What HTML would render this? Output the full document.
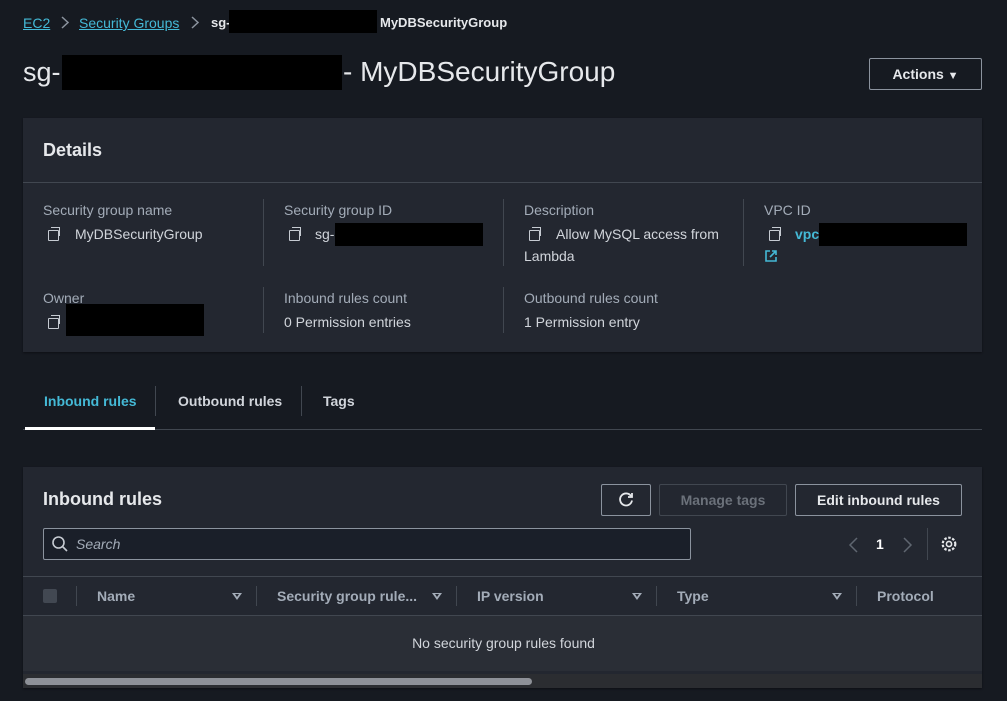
<!DOCTYPE html>
<html><head><style>
*{margin:0;padding:0;box-sizing:border-box}
body{width:1007px;height:701px;background:#161a21;font-family:"Liberation Sans",sans-serif;color:#d1d5db;position:relative;overflow:hidden;font-size:14px}
.a{position:absolute;white-space:nowrap}
.blk{position:absolute;background:#000}
.lbl{color:#a3acb8;font-size:14px}
.val{color:#d1d5db;font-size:14px}
.b{font-weight:bold}
.vl{position:absolute;width:1px;background:#414750}
.cp{position:absolute;width:11px;height:11px;border:1.5px solid #c6cbd2;border-radius:1px}
.cp:before{content:"";position:absolute;left:2px;top:-4px;width:8px;height:8px;border-top:1.5px solid #c6cbd2;border-right:1.5px solid #c6cbd2}
.panel{position:absolute;background:#232730;box-shadow:0 1px 2px #0006}
.btn{position:absolute;border:1px solid #8b939e;border-radius:2px;color:#e6e8eb;font-weight:bold;font-size:14px;text-align:center}
.tri{position:absolute;width:0;height:0;border-left:5px solid transparent;border-right:5px solid transparent;border-top:7px solid #a3acb8}
.tri:after{content:"";position:absolute;left:-2.5px;top:-5.8px;border-left:2.5px solid transparent;border-right:2.5px solid transparent;border-top:3.5px solid #232730}
</style></head><body>
<div class="a" style="left:23px;top:15px;color:#44b9d6;text-decoration:underline;font-size:14px">EC2</div>
<svg class="a" style="left:60px;top:15px" width="10" height="15"><path d="M2 2l6 5.5L2 13" stroke="#8b939e" stroke-width="1.5" fill="none"/></svg>
<div class="a" style="left:79px;top:15px;color:#44b9d6;text-decoration:underline;font-size:14px">Security Groups</div>
<svg class="a" style="left:190px;top:15px" width="10" height="15"><path d="M2 2l6 5.5L2 13" stroke="#8b939e" stroke-width="1.5" fill="none"/></svg>
<div class="a b" style="left:211px;top:15px;color:#e6e8eb;font-size:13px">sg-</div>
<div class="blk" style="left:229px;top:10px;width:148px;height:23px"></div>
<div class="a b" style="left:380px;top:15px;color:#e6e8eb;font-size:13px">MyDBSecurityGroup</div>

<div class="a" style="left:23px;top:57px;color:#e6e8eb;font-size:27px">sg-</div>
<div class="blk" style="left:62px;top:55px;width:280px;height:35px"></div>
<div class="a" style="left:343px;top:56px;color:#e6e8eb;font-size:28px">- MyDBSecurityGroup</div>
<div class="btn" style="left:869px;top:58px;width:113px;height:32px;line-height:30px">Actions <span style="font-size:11px">&#9660;</span></div>

<div class="panel" style="left:23px;top:118px;width:959px;height:234px"></div>
<div class="a b" style="left:43px;top:140px;font-size:18px;color:#e6e8eb">Details</div>
<div class="a" style="left:23px;top:182px;width:959px;height:1px;background:#414750"></div>
<div class="vl" style="left:263px;top:199px;height:67px"></div>
<div class="vl" style="left:503px;top:199px;height:67px"></div>
<div class="vl" style="left:743px;top:199px;height:67px"></div>
<div class="vl" style="left:263px;top:287px;height:46px"></div>
<div class="vl" style="left:503px;top:287px;height:46px"></div>

<div class="a lbl" style="left:43px;top:202px">Security group name</div>
<div class="cp" style="left:48px;top:230px"></div>
<div class="a val" style="left:75px;top:226px">MyDBSecurityGroup</div>
<div class="a lbl" style="left:284px;top:202px">Security group ID</div>
<div class="cp" style="left:289px;top:230px"></div>
<div class="a val" style="left:315px;top:226px">sg-</div>
<div class="blk" style="left:335px;top:223px;width:148px;height:23px"></div>
<div class="a lbl" style="left:524px;top:202px">Description</div>
<div class="cp" style="left:529px;top:230px"></div>
<div class="a val" style="left:556px;top:226px">Allow MySQL access from</div>
<div class="a val" style="left:524px;top:248px">Lambda</div>
<div class="a lbl" style="left:764px;top:202px">VPC ID</div>
<div class="cp" style="left:769px;top:230px"></div>
<div class="a b" style="left:795px;top:226px;color:#44b9d6;font-size:14px">vpc-</div>
<div class="blk" style="left:819px;top:223px;width:148px;height:23px"></div>
<svg class="a" style="left:764px;top:249px" width="14" height="14"><path d="M6 2H2v10h10V8M8 2h4v4M12 2L6 8" stroke="#44b9d6" stroke-width="1.6" fill="none"/></svg>

<div class="a lbl" style="left:43px;top:290px">Owner</div>
<div class="cp" style="left:48px;top:318px"></div>
<div class="blk" style="left:66px;top:304px;width:138px;height:32px"></div>
<div class="a lbl" style="left:284px;top:290px">Inbound rules count</div>
<div class="a val" style="left:284px;top:314px">0 Permission entries</div>
<div class="a lbl" style="left:524px;top:290px">Outbound rules count</div>
<div class="a val" style="left:524px;top:314px">1 Permission entry</div>

<div class="a b" style="left:44px;top:393px;color:#44b9d6;font-size:14px">Inbound rules</div>
<div class="vl" style="left:155px;top:386px;height:30px"></div>
<div class="a b" style="left:178px;top:393px;color:#d1d5db;font-size:14px">Outbound rules</div>
<div class="vl" style="left:301px;top:386px;height:30px"></div>
<div class="a b" style="left:323px;top:393px;color:#d1d5db;font-size:14px">Tags</div>
<div class="a" style="left:23px;top:429px;width:959px;height:1px;background:#414750"></div>
<div class="a" style="left:25px;top:427px;width:130px;height:3px;background:#fff"></div>

<div class="panel" style="left:23px;top:467px;width:959px;height:221px"></div>
<div class="a b" style="left:43px;top:489px;font-size:18px;color:#e6e8eb">Inbound rules</div>
<div class="btn" style="left:601px;top:484px;width:50px;height:32px"></div>
<svg class="a" style="left:617px;top:491px" width="18" height="18"><path d="M14 5A6 6 0 1 0 15 9.5" stroke="#e6e8eb" stroke-width="1.8" fill="none"/><path d="M15 2v4h-4" stroke="#e6e8eb" stroke-width="1.8" fill="none"/></svg>
<div class="btn" style="left:659px;top:484px;width:128px;height:32px;line-height:30px;color:#6b717a;border-color:#414750">Manage tags</div>
<div class="btn" style="left:795px;top:484px;width:167px;height:32px;line-height:30px">Edit inbound rules</div>

<div class="a" style="left:43px;top:528px;width:648px;height:32px;background:#1a1f29;border:1px solid #8b939e;border-radius:2px"></div>
<svg class="a" style="left:51px;top:535px" width="18" height="18"><circle cx="7.5" cy="7.5" r="5.5" stroke="#c6cbd2" stroke-width="1.6" fill="none"/><path d="M11.5 11.5l4.5 4.5" stroke="#c6cbd2" stroke-width="1.6"/></svg>
<div class="a" style="left:76px;top:536px;color:#a3acb8;font-style:italic">Search</div>
<svg class="a" style="left:847px;top:535px" width="12" height="20"><path d="M10 3L3 10l7 7" stroke="#5f6670" stroke-width="1.5" fill="none"/></svg>
<div class="a b" style="left:876px;top:536px;color:#fff">1</div>
<svg class="a" style="left:902px;top:535px" width="12" height="20"><path d="M2 3l7 7-7 7" stroke="#5f6670" stroke-width="1.5" fill="none"/></svg>
<div class="vl" style="left:927px;top:528px;height:32px"></div>
<svg class="a" style="left:940px;top:535px" width="18" height="18"><circle cx="9" cy="9" r="2.6" stroke="#e6e8eb" stroke-width="1.6" fill="none"/><circle cx="9" cy="9" r="6.3" stroke="#e6e8eb" stroke-width="2.2" fill="none" stroke-dasharray="2.5 1.6"/></svg>

<div class="a" style="left:23px;top:576px;width:959px;height:1px;background:#414750"></div>
<div class="a" style="left:43px;top:589px;width:14px;height:14px;background:#424852;border-radius:2px"></div>
<div class="vl" style="left:76px;top:586px;height:20px"></div>
<div class="a b" style="left:97px;top:588px;color:#a3acb8">Name</div>
<div class="tri" style="left:232px;top:593px"></div>
<div class="vl" style="left:256px;top:586px;height:20px"></div>
<div class="a b" style="left:277px;top:588px;color:#a3acb8">Security group rule...</div>
<div class="tri" style="left:432px;top:593px"></div>
<div class="vl" style="left:456px;top:586px;height:20px"></div>
<div class="a b" style="left:477px;top:588px;color:#a3acb8">IP version</div>
<div class="tri" style="left:632px;top:593px"></div>
<div class="vl" style="left:656px;top:586px;height:20px"></div>
<div class="a b" style="left:677px;top:588px;color:#a3acb8">Type</div>
<div class="tri" style="left:832px;top:593px"></div>
<div class="vl" style="left:856px;top:586px;height:20px"></div>
<div class="a b" style="left:877px;top:588px;color:#a3acb8">Protocol</div>
<div class="a" style="left:23px;top:615px;width:959px;height:1px;background:#414750"></div>
<div class="a" style="left:23px;top:616px;width:959px;height:55px;background:#2a2e36"></div>
<div class="a" style="left:0;top:635px;width:1007px;text-align:center;color:#d1d5db">No security group rules found</div>
<div class="a" style="left:23px;top:674px;width:959px;height:14px;background:#2b2d31"></div>
<div class="a" style="left:25px;top:678px;width:507px;height:7px;background:#8e9198;border-radius:4px"></div>
</body></html>
